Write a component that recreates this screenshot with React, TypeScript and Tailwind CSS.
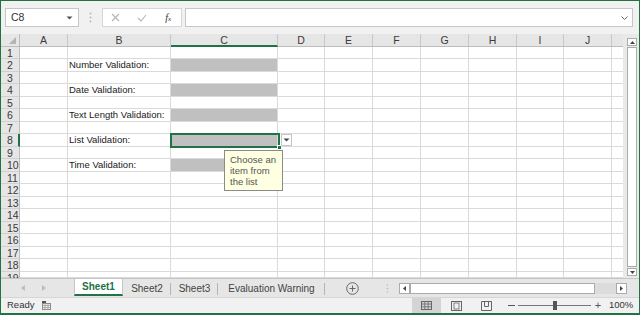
import React from "react";

const colW = [
  "w-[48px]",
  "w-[103px]",
  "w-[107px]",
  "w-[47px]",
  "w-[48px]",
  "w-[48px]",
  "w-[48px]",
  "w-[48px]",
  "w-[47px]",
  "w-[48px]",
  "w-[11px]",
];
const letters = ["A", "B", "C", "D", "E", "F", "G", "H", "I", "J", ""];
const labels: Record<number, string> = {
  2: "Number Validation:",
  4: "Date Validation:",
  6: "Text Length Validation:",
  8: "List Validation:",
  10: "Time Validation:",
};

function Tooltip() {
  return (
    <div className="absolute left-[54px] top-[17px] z-20 w-[59px] h-[41px] bg-[#ffffe1] border border-[#8a8a8a] pl-[5px] pt-[3px] text-[9.5px] leading-[11px] text-[#555555] whitespace-nowrap">
      <div>Choose an</div>
      <div>item from</div>
      <div>the list</div>
    </div>
  );
}

function Row({ n }: { n: number }) {
  const h = n === 19 ? "h-[6px]" : n % 2 === 1 ? "h-[12px]" : "h-[13px]";
  const sel = n === 8;
  return (
    <div className={`flex ${h} overflow-hidden`}>
      <div
        className={`w-[19px] shrink-0 bg-[#e6e6e6] border-b border-[#d0d0d0] pl-[6px] text-[10.5px] leading-[12px] text-[#3a3a3a] ${
          sel ? "border-r-2 border-r-[#217346]" : "border-r border-r-[#bdbdbd]"
        }`}
      >
        {n}
      </div>
      {colW.map((w, i) => {
        const isC = i === 2;
        const fill = isC && labels[n] !== undefined;
        return (
          <div
            key={i}
            className={`${w} shrink-0 relative border-r border-b border-[#dadada] ${
              fill ? "bg-[#c0c0c0]" : "bg-white"
            } ${i === 10 ? "border-r-0" : ""}`}
          >
            {i === 1 && labels[n] && (
              <div className="absolute left-[1px] bottom-[0px] text-[9.5px] leading-[12px] text-[#1a1a1a] whitespace-nowrap">
                {labels[n]}
              </div>
            )}
          </div>
        );
      })}
    </div>
  );
}

function SelectedOverlay() {
  return (
    <div className="absolute left-[169px] top-[99px] w-[110px] h-[15px] z-10 pointer-events-none">
      <div className="absolute inset-0 border-2 border-[#217346]" />
      <div className="absolute right-[-2px] bottom-[-2px] w-[5px] h-[5px] bg-[#217346] border border-white" />
      <div className="absolute left-[111px] top-[1px] w-[11px] h-[12px] bg-white border border-[#c6c6c6] flex items-center justify-center">
        <svg width="7" height="4" viewBox="0 0 7 4">
          <path d="M0.5 0.5 L3.5 3.5 L6.5 0.5 Z" fill="#444" />
        </svg>
      </div>
      <Tooltip />
    </div>
  );
}

export default function App() {
  const rows = Array.from({ length: 19 }, (_, i) => i + 1);
  return (
    <div
      className="w-[640px] h-[315px] border border-b-2 border-[#217346] bg-[#f1f1f1] flex flex-col overflow-hidden"
      style={{ fontFamily: '"Liberation Sans", Arial, sans-serif' }}
    >
      {/* Formula bar */}
      <div className="h-[33px] shrink-0 flex items-start pt-[7px] pl-[4px]">
        <div className="w-[74px] h-[19px] bg-white border border-[#c6c6c6] flex items-center justify-between pl-[5px] pr-[5px]">
          <span className="text-[10.5px] text-[#333]">C8</span>
          <svg width="7" height="4" viewBox="0 0 7 4">
            <path d="M0.5 0.5 L3.5 3.5 L6.5 0.5 Z" fill="#555" />
          </svg>
        </div>
        <div className="w-[23px] h-[19px] flex items-center justify-center">
          <svg width="3" height="11" viewBox="0 0 3 11">
            <circle cx="1.5" cy="1.5" r="1" fill="#b8b8b8" />
            <circle cx="1.5" cy="5.5" r="1" fill="#b8b8b8" />
            <circle cx="1.5" cy="9.5" r="1" fill="#b8b8b8" />
          </svg>
        </div>
        <div className="w-[80px] h-[19px] bg-white border border-[#d6d6d6] flex items-center">
          <div className="w-[26px] flex justify-center">
            <svg width="9" height="9" viewBox="0 0 9 9">
              <path d="M1 1 L8 8 M8 1 L1 8" stroke="#b4b4b4" strokeWidth="1.1" />
            </svg>
          </div>
          <div className="w-[27px] flex justify-center">
            <svg width="10" height="8" viewBox="0 0 10 8">
              <path d="M1 4 L4 7 L9 1" stroke="#b4b4b4" strokeWidth="1.1" fill="none" />
            </svg>
          </div>
          <div
            className="w-[26px] flex justify-center italic text-[10px] text-[#333]"
            style={{ fontFamily: '"Liberation Serif", serif' }}
          >
            <span>
              f<span className="text-[7px]">x</span>
            </span>
          </div>
        </div>
        <div className="ml-[3px] w-[448px] h-[19px] bg-white border border-[#c6c6c6] flex items-center justify-end pr-[4px]">
          <svg width="7" height="4" viewBox="0 0 7 4">
            <path d="M0.5 0.5 L3.5 3.5 L6.5 0.5" stroke="#666" strokeWidth="1" fill="none" />
          </svg>
        </div>
      </div>

      {/* Grid + vertical scrollbar */}
      <div className="flex h-[244px] shrink-0">
        <div className="w-[622px] shrink-0 flex flex-col relative">
          <div className="flex h-[13px]">
            <div className="w-[19px] shrink-0 bg-[#e6e6e6] border-r border-b border-[#bdbdbd] relative">
              <svg className="absolute right-[2px] bottom-[1px]" width="8" height="8" viewBox="0 0 8 8">
                <path d="M7 0 L7 7 L0 7 Z" fill="#b4b4b4" />
              </svg>
            </div>
            {colW.map((w, i) => (
              <div
                key={i}
                className={`${w} shrink-0 bg-[#e6e6e6] border-r border-[#c8c8c8] flex items-center justify-center text-[10.5px] leading-[12px] text-[#3a3a3a] ${
                  i === 2 ? "border-b-2 border-b-[#217346]" : "border-b border-b-[#bdbdbd]"
                } ${i === 10 ? "border-r-0" : ""}`}
              >
                {letters[i]}
              </div>
            ))}
          </div>
          {rows.map((n) => (
            <Row key={n} n={n} />
          ))}
          <SelectedOverlay />
        </div>
        <div className="w-[16px] shrink-0 bg-[#e9e9e9] flex flex-col pl-[4px] pr-[2px] pt-[4px] pb-[2px]">
          <div className="w-[10px] h-[8px] bg-white border border-[#ababab] flex items-center justify-center">
            <svg width="5" height="3" viewBox="0 0 5 3">
              <path d="M0 3 L2.5 0 L5 3 Z" fill="#444" />
            </svg>
          </div>
          <div className="w-[10px] flex-1 bg-white border border-[#ababab] mt-[1px] mb-[1px]" />
          <div className="w-[10px] h-[8px] bg-white border border-[#ababab] flex items-center justify-center">
            <svg width="5" height="3" viewBox="0 0 5 3">
              <path d="M0 0 L2.5 3 L5 0 Z" fill="#444" />
            </svg>
          </div>
        </div>
      </div>

      {/* Tab bar */}
      <div className="h-[19px] shrink-0 bg-[#e6e6e6] border-t border-[#c6c6c6] flex items-stretch">
        <div className="w-[73px] shrink-0 flex items-center pl-[20px] gap-[17px]">
          <svg width="4" height="6" viewBox="0 0 4 6">
            <path d="M4 0 L0 3 L4 6 Z" fill="#bcbcbc" />
          </svg>
          <svg width="4" height="6" viewBox="0 0 4 6">
            <path d="M0 0 L4 3 L0 6 Z" fill="#bcbcbc" />
          </svg>
        </div>
        <div className="w-[49px] shrink-0 bg-white border-l border-r border-[#c6c6c6] border-b-2 border-b-[#217346] flex items-center justify-center text-[10px] font-bold text-[#217346] mb-[1px]">
          Sheet1
        </div>
        {["Sheet2", "Sheet3", "Evaluation Warning"].map((t, i) => (
          <div
            key={t}
            className={`${i === 0 ? "w-[48px]" : i === 1 ? "w-[47px]" : "w-[107px]"} shrink-0 flex items-center justify-center text-[10px] text-[#444] relative`}
          >
            {t}
            <div className="absolute right-0 top-[4px] h-[12px] w-px bg-[#b4b4b4]" />
          </div>
        ))}
        <div className="w-[50px] shrink-0 flex items-center justify-center pl-[4px]">
          <svg width="13" height="13" viewBox="0 0 13 13">
            <circle cx="6.5" cy="6.5" r="5.8" stroke="#666" strokeWidth="1" fill="none" />
            <path d="M6.5 3.5 V9.5 M3.5 6.5 H9.5" stroke="#666" strokeWidth="1" />
          </svg>
        </div>
        <div className="w-[24px] shrink-0 flex items-center justify-center">
          <svg width="3" height="9" viewBox="0 0 3 9">
            <circle cx="1.5" cy="1" r="0.8" fill="#b8b8b8" />
            <circle cx="1.5" cy="4.5" r="0.8" fill="#b8b8b8" />
            <circle cx="1.5" cy="8" r="0.8" fill="#b8b8b8" />
          </svg>
        </div>
        <div className="flex items-center">
          <div className="w-[11px] h-[11px] bg-white border border-[#ababab] flex items-center justify-center">
            <svg width="3" height="5" viewBox="0 0 3 5">
              <path d="M3 0 L0 2.5 L3 5 Z" fill="#444" />
            </svg>
          </div>
          <div className="w-[185px] h-[11px] bg-white border border-[#ababab]" />
          <div className="w-[21px] h-[11px] bg-[#dcdcdc]" />
          <div className="w-[11px] h-[11px] bg-white border border-[#ababab] flex items-center justify-center">
            <svg width="3" height="5" viewBox="0 0 3 5">
              <path d="M0 0 L3 2.5 L0 5 Z" fill="#444" />
            </svg>
          </div>
        </div>
      </div>

      {/* Status bar */}
      <div className="h-[16px] shrink-0 bg-[#f1f1f1] border-t border-[#d6d6d6] flex items-center text-[9.5px] text-[#333]">
        <span className="pl-[6px] w-[41px]">Ready</span>
        <svg width="9" height="9" viewBox="0 0 9 9">
          <rect x="0.5" y="2.5" width="8" height="6" fill="none" stroke="#888" />
          <path d="M0.5 4.5 H8.5 M0.5 6.5 H8.5 M3 2.5 V8.5 M6 2.5 V8.5" stroke="#aaa" strokeWidth="1" />
          <rect x="0" y="0" width="4" height="2" fill="#555" />
        </svg>
        <div className="flex-1" />
        <div className="w-[29px] h-[15px] bg-[#d4d4d4] flex items-center justify-center">
          <svg width="11" height="9" viewBox="0 0 11 9">
            <rect x="0.5" y="0.5" width="10" height="8" fill="none" stroke="#666" />
            <path d="M0.5 3 H10.5 M0.5 5.8 H10.5 M3.8 0.5 V8.5 M7.2 0.5 V8.5" stroke="#666" strokeWidth="0.8" />
          </svg>
        </div>
        <div className="w-[30px] flex items-center justify-center">
          <svg width="11" height="10" viewBox="0 0 11 10">
            <rect x="0.5" y="0.5" width="10" height="9" fill="none" stroke="#666" />
            <rect x="3" y="2" width="5" height="6" fill="none" stroke="#666" strokeWidth="0.8" />
          </svg>
        </div>
        <div className="w-[30px] flex items-center justify-center">
          <svg width="11" height="10" viewBox="0 0 11 10">
            <path d="M0.5 9.5 V0.5 H10.5 V9.5 Z" fill="none" stroke="#666" />
            <path d="M3.5 0.5 V5.5 H7.5 V0.5" fill="none" stroke="#666" />
          </svg>
        </div>
        <div className="w-[14px] ml-[3px] flex items-center justify-center">
          <div className="w-[7px] h-px bg-[#555]" />
        </div>
        <div className="w-[73px] h-[9px] relative flex items-center">
          <div className="w-full h-px bg-[#777]" />
          <div className="absolute left-[35px] top-0 w-[4px] h-[9px] bg-[#555]" />
        </div>
        <div className="w-[14px] flex items-center justify-center text-[11px] text-[#555]">+</div>
        <span className="w-[34px] pl-[4px] text-[9.5px] text-[#333]">100%</span>
      </div>
    </div>
  );
}
